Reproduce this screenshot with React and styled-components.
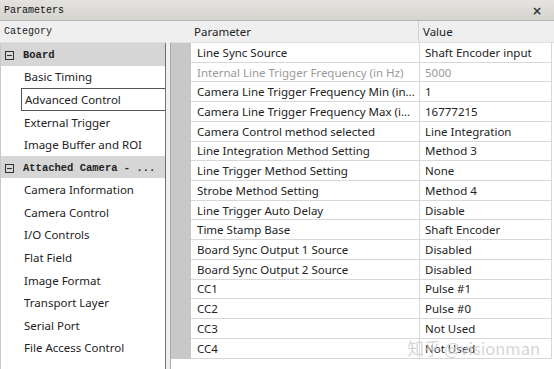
import React from "react";
import styled, { createGlobalStyle } from "styled-components";

const Global = createGlobalStyle`
  html, body { margin: 0; padding: 0; background: #f0f0f0; }
  * { box-sizing: border-box; }
`;

const Window = styled.div`
  position: relative;
  width: 554px;
  height: 369px;
  overflow: hidden;
  background: #f0f0f0;
  display: flex;
  flex-direction: column;
  font-family: "Noto Sans", "Liberation Sans", sans-serif;
  font-size: 11.5px;
  color: #222;
`;

const TitleBar = styled.div`
  height: 21px;
  flex: none;
  display: flex;
  align-items: center;
  justify-content: space-between;
  padding: 1px 12px 0 4px;
  background: linear-gradient(#e4e3df, #d4d3ce);
  border-bottom: 1px solid #b4b3ae;
  font-family: "Liberation Mono", monospace;
  font-size: 10px;
  color: #111;
`;

const Close = styled.span`
  font-family: "DejaVu Sans", sans-serif;
  font-weight: bold;
  font-size: 12px;
  color: #333;
`;

const Body = styled.div`
  flex: 1;
  display: grid;
  grid-template-columns: 166px 384px;
  column-gap: 4px;
`;

const Panel = styled.div`
  display: flex;
  flex-direction: column;
  min-height: 0;
`;

const HeaderRow = styled.div`
  height: 22px;
  flex: none;
  display: flex;
  align-items: center;
  background: #efefef;
  border-bottom: 1px solid #e0e0e0;
`;

const MonoHeader = styled.span`
  font-family: "Liberation Mono", monospace;
  font-size: 10px;
  padding-left: 4px;
`;

const Tree = styled.div`
  flex: 1;
  background: #fff;
  border-left: 1px solid #c8c8c8;
  border-right: 1px solid #707070;
`;

const TreeRow = styled.div`
  height: 22.58px;
  display: flex;
  align-items: center;
  padding-left: ${p => (p.$group ? "4px" : "23px")};
  padding-top: ${p => (p.$group ? "2px" : "0")};
  background: ${p => (p.$group ? "#d6d6d6" : "#fff")};
  font-family: ${p => (p.$group ? '"Liberation Mono", monospace' : "inherit")};
  font-weight: ${p => (p.$group ? "bold" : "normal")};
  font-size: ${p => (p.$group ? "10.5px" : "11.5px")};
  color: #222;
  white-space: nowrap;
  overflow: hidden;
`;

const FocusRow = styled(TreeRow)`
  margin-left: 20px;
  padding-left: 3px;
  border: 1px solid #555;
  border-right: none;
`;

const MinusBox = styled.span`
  width: 9px;
  height: 9px;
  border: 1px solid #333;
  margin-right: 9px;
  position: relative;
  flex: none;
  &::after {
    content: "";
    position: absolute;
    left: 1px;
    right: 1px;
    top: 3px;
    height: 1px;
    background: #333;
  }
`;

const Grid = styled.div`
  display: grid;
  grid-template-columns: 20px 228px 133px;
  grid-auto-rows: 19.73px;
  border-left: 1px solid #a8a8a8;
  align-content: start;
  background: #fff;
  flex: 1;
`;

const HeadCell = styled.div`
  display: flex;
  align-items: center;
  padding-left: 4px;
  border-left: ${p => (p.$sep ? "1px solid #d0d0d0" : "none")};
  height: 21px;
`;

const PHeader = styled.div`
  height: 22px;
  flex: none;
  display: grid;
  grid-template-columns: 20px 228px 133px;
  background: #efefef;
  border-bottom: 1px solid #e0e0e0;
`;

const Gutter = styled.div`
  background: #c8c8c8;
  border-bottom: 1px solid #c8c8c8;
`;

const Cell = styled.div`
  display: flex;
  align-items: center;
  padding-left: ${p => (p.$value ? "5px" : "6px")};
  border-bottom: 1px solid #d8d8d8;
  border-left: ${p => (p.$value ? "1px solid #d8d8d8" : "none")};
  border-right: ${p => (p.$value ? "1px solid #d8d8d8" : "none")};
  color: ${p => (p.$dim ? "#9a9a9a" : "#222")};
  white-space: nowrap;
  overflow: hidden;
`;

const Watermark = styled.div`
  position: absolute;
  right: 14px;
  bottom: 9px;
  font-family: "Noto Sans CJK SC", "Noto Sans", sans-serif;
  font-size: 16.5px;
  color: rgba(170, 170, 170, 0.5);
  text-shadow: 0 0 1px rgba(255,255,255,0.8);
  pointer-events: none;
`;

const tree = [
  { g: true, t: "Board" },
  { t: "Basic Timing" },
  { t: "Advanced Control", focus: true },
  { t: "External Trigger" },
  { t: "Image Buffer and ROI" },
  { g: true, t: "Attached Camera - ..." },
  { t: "Camera Information" },
  { t: "Camera Control" },
  { t: "I/O Controls" },
  { t: "Flat Field" },
  { t: "Image Format" },
  { t: "Transport Layer" },
  { t: "Serial Port" },
  { t: "File Access Control" },
];

const rows = [
  ["Line Sync Source", "Shaft Encoder input"],
  ["Internal Line Trigger Frequency (in Hz)", "5000", true],
  ["Camera Line Trigger Frequency Min (in...", "1"],
  ["Camera Line Trigger Frequency Max (i...", "16777215"],
  ["Camera Control method selected", "Line Integration"],
  ["Line Integration Method Setting", "Method 3"],
  ["Line Trigger Method Setting", "None"],
  ["Strobe Method Setting", "Method 4"],
  ["Line Trigger Auto Delay", "Disable"],
  ["Time Stamp Base", "Shaft Encoder"],
  ["Board Sync Output 1 Source", "Disabled"],
  ["Board Sync Output 2 Source", "Disabled"],
  ["CC1", "Pulse #1"],
  ["CC2", "Pulse #0"],
  ["CC3", "Not Used"],
  ["CC4", "Not Used"],
];

export default function App() {
  return (
    <>
      <Global />
      <Window>
        <TitleBar>
          <span>Parameters</span>
          <Close>×</Close>
        </TitleBar>
        <Body>
          <Panel>
            <HeaderRow>
              <MonoHeader>Category</MonoHeader>
            </HeaderRow>
            <Tree>
              {tree.map((n, i) =>
                n.focus ? (
                  <FocusRow key={i}>{n.t}</FocusRow>
                ) : (
                  <TreeRow key={i} $group={n.g}>
                    {n.g && <MinusBox />}
                    {n.t}
                  </TreeRow>
                )
              )}
            </Tree>
          </Panel>
          <Panel>
            <PHeader>
              <HeadCell />
              <HeadCell>Parameter</HeadCell>
              <HeadCell $sep>Value</HeadCell>
            </PHeader>
            <Grid>
              {rows.map(([p, v, dim], i) => (
                <React.Fragment key={i}>
                  <Gutter />
                  <Cell $dim={dim}>{p}</Cell>
                  <Cell $value $dim={dim}>{v}</Cell>
                </React.Fragment>
              ))}
            </Grid>
          </Panel>
        </Body>
        <Watermark>知乎 @visionman</Watermark>
      </Window>
    </>
  );
}
